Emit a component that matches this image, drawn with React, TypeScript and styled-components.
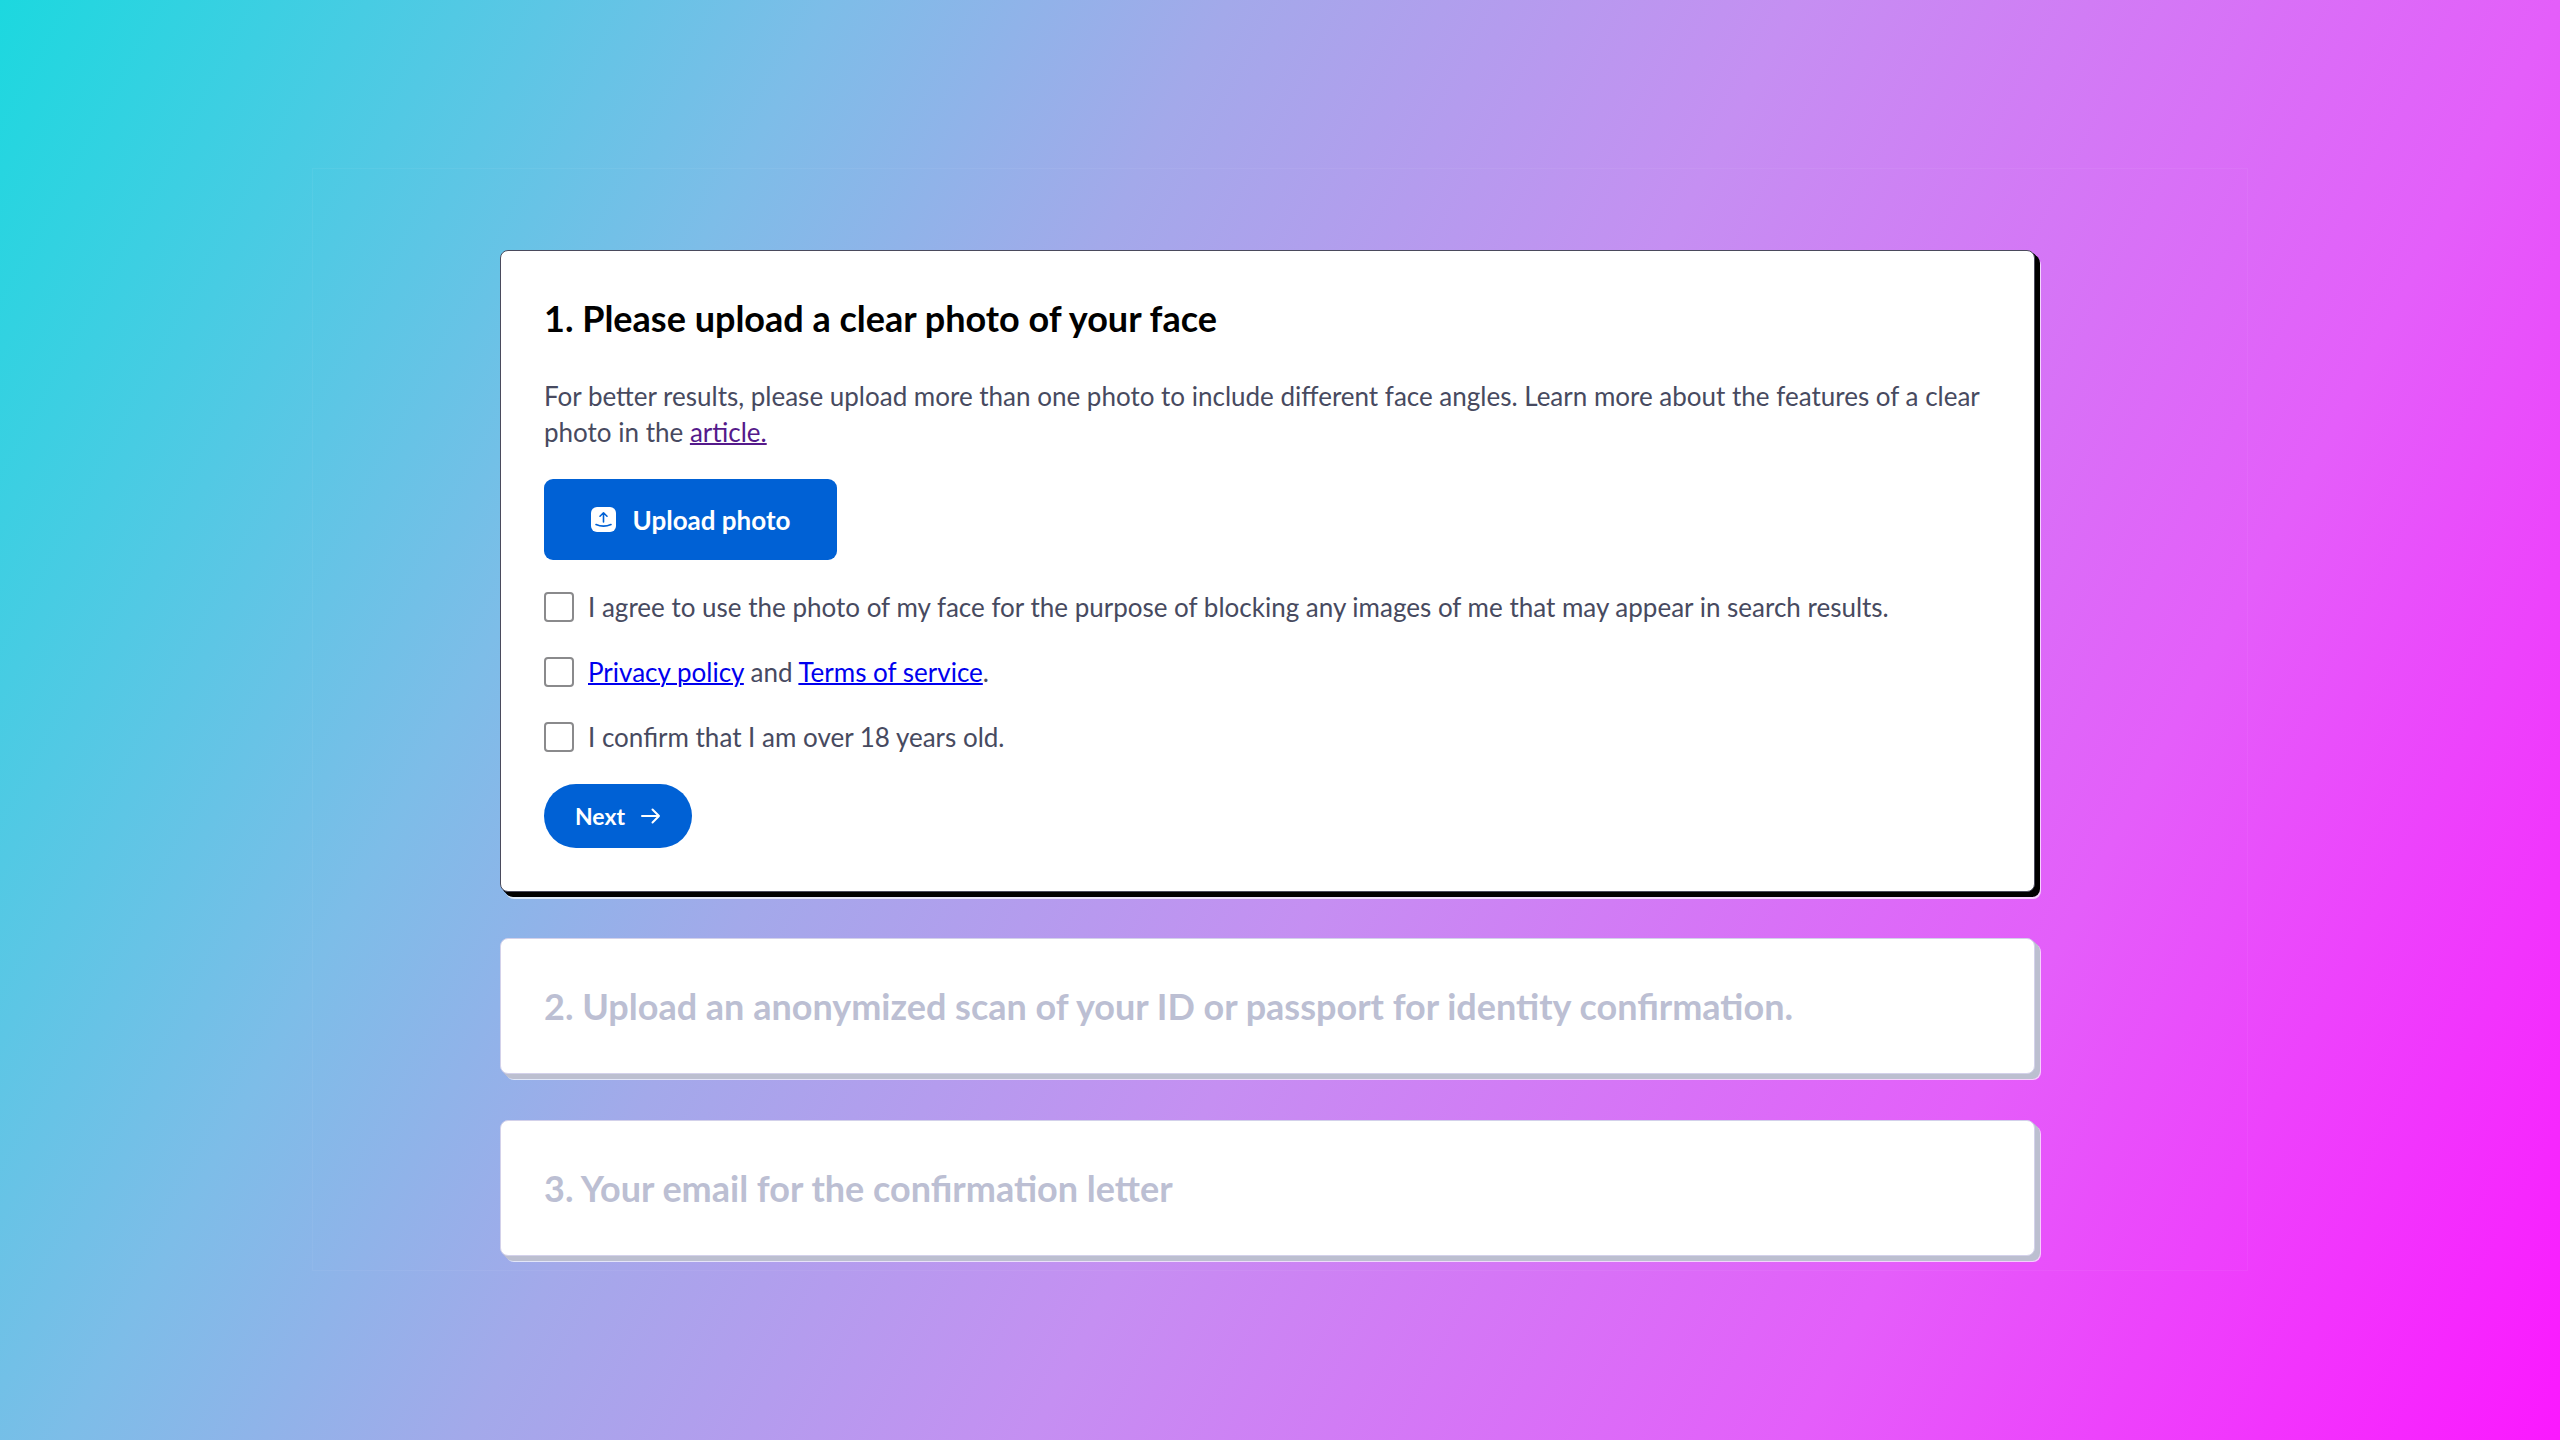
import React from "react";
import styled, { createGlobalStyle, css } from "styled-components";

const GlobalStyle = createGlobalStyle`
  *, *::before, *::after { box-sizing: border-box; }
  body {
    margin: 0;
    font-family: Lato, "Liberation Sans", sans-serif;
    color: #474a60;
  }
  h2, p { margin: 0; }
`;

const Page = styled.main`
  min-height: 100vh;
  padding: 168px 312px;
  background: linear-gradient(
    118deg,
    #1cd8df 0%,
    #7dbde8 25%,
    #a3a9ea 37%,
    #c58ff2 54%,
    #e45efa 77%,
    #fb18ff 100%
  );
`;

const Steps = styled.form`
  display: flex;
  flex-direction: column;
  gap: 46px;
  padding: 81px 212px 14px 187px;
  border: 1px solid rgba(255, 255, 255, 0.05);
`;

const Card = styled.section<{ $locked?: boolean }>`
  display: flex;
  flex-direction: column;
  align-items: flex-start;
  gap: 29px;
  padding: 43px;
  border: 1px solid #4a4a5c;
  border-radius: 8px;
  background: #fff;
  box-shadow: 2px 2px 0 #000, 4px 4px 0 #000, 5px 5px 0 #000,
    6px 7px 0 rgba(255, 255, 255, 0.7);
  ${(p) =>
    p.$locked &&
    css`
      border-color: #d3d1ea;
      box-shadow: 2px 2px 0 #bcbfd0, 4px 4px 0 #bcbfd0, 5px 5px 0 #bcbfd0,
        6px 6px 0 rgba(255, 255, 255, 0.7);
    `}
`;

const Intro = styled.div`
  display: flex;
  flex-direction: column;
  gap: 36px;
`;

const Title = styled.h2<{ $locked?: boolean }>`
  font-size: 36px;
  line-height: 48px;
  font-weight: 700;
  color: ${(p) => (p.$locked ? "#bcbfd3" : "#000")};
`;

const Text = styled.p`
  font-size: 26px;
  line-height: 36px;
`;

const Link = styled.a<{ $visited?: boolean }>`
  color: ${(p) => (p.$visited ? "#551a8b" : "#0000ee")};
  text-decoration: underline;
  text-decoration-thickness: 2px;
`;

const Button = styled.button<{ $round?: boolean }>`
  display: inline-flex;
  align-items: center;
  justify-content: center;
  gap: ${(p) => (p.$round ? "16px" : "17px")};
  min-width: ${(p) => (p.$round ? "148px" : "293px")};
  height: ${(p) => (p.$round ? "64px" : "81px")};
  padding: 0 30px;
  border: 0;
  border-radius: ${(p) => (p.$round ? "32px" : "9px")};
  background: #0061d5;
  color: #fff;
  font-family: inherit;
  font-size: ${(p) => (p.$round ? "23px" : "26px")};
  font-weight: 700;
  cursor: pointer;
`;

const CheckRow = styled.div`
  display: flex;
  align-items: center;
  gap: 14px;
  font-size: 26px;
  line-height: 36px;
`;

const Checkbox = styled.input.attrs({ type: "checkbox" })`
  appearance: none;
  flex: none;
  width: 30px;
  height: 30px;
  margin: 0;
  border: 2px solid #8a8a8c;
  border-radius: 4px;
  background: #fff;
  &:checked { background: #0061d5; }
`;

const UploadIcon = () => (
  <svg width="25" height="25" viewBox="0 0 25 25" fill="none" aria-hidden="true">
    <rect width="25" height="25" rx="6" fill="#fff" />
    <path
      d="M12.5 15V6M9 9.200l3.500-3.400 3.500 3.400M5 17.500c4.500 2 10.500 2 15 0"
      stroke="#0061d5"
      strokeWidth="1.600"
      strokeLinecap="round"
      strokeLinejoin="round"
    />
  </svg>
);

const ArrowIcon = () => (
  <svg width="20" height="16" viewBox="0 0 20 16" fill="none" aria-hidden="true">
    <path
      d="M1 8h17M11.500 1.500L18 8l-6.500 6.500"
      stroke="#fff"
      strokeWidth="2"
      strokeLinecap="round"
      strokeLinejoin="round"
    />
  </svg>
);

export default function App() {
  return (
    <>
      <GlobalStyle />
      <Page>
        <Steps onSubmit={(e: React.FormEvent) => e.preventDefault()}>
          <Card>
            <Intro>
              <Title>1. Please upload a clear photo of your face</Title>
              <Text>
                For better results, please upload more than one photo to include
                different face angles. Learn more about the features of a clear
                photo in the <Link href="#article" $visited>article.</Link>
              </Text>
            </Intro>
            <Button type="button">
              <UploadIcon />
              Upload photo
            </Button>
            <CheckRow>
              <Checkbox id="consent" />
              <label htmlFor="consent">
                I agree to use the photo of my face for the purpose of blocking
                any images of me that may appear in search results.
              </label>
            </CheckRow>
            <CheckRow>
              <Checkbox id="policies" />
              <label htmlFor="policies">
                <Link href="#privacy">Privacy policy</Link> and{" "}
                <Link href="#terms">Terms of service</Link>.
              </label>
            </CheckRow>
            <CheckRow>
              <Checkbox id="age" />
              <label htmlFor="age">I confirm that I am over 18 years old.</label>
            </CheckRow>
            <Button type="submit" $round>
              Next
              <ArrowIcon />
            </Button>
          </Card>
          <Card $locked>
            <Title $locked>
              2. Upload an anonymized scan of your ID or passport for identity
              confirmation.
            </Title>
          </Card>
          <Card $locked>
            <Title $locked>3. Your email for the confirmation letter</Title>
          </Card>
        </Steps>
      </Page>
    </>
  );
}
